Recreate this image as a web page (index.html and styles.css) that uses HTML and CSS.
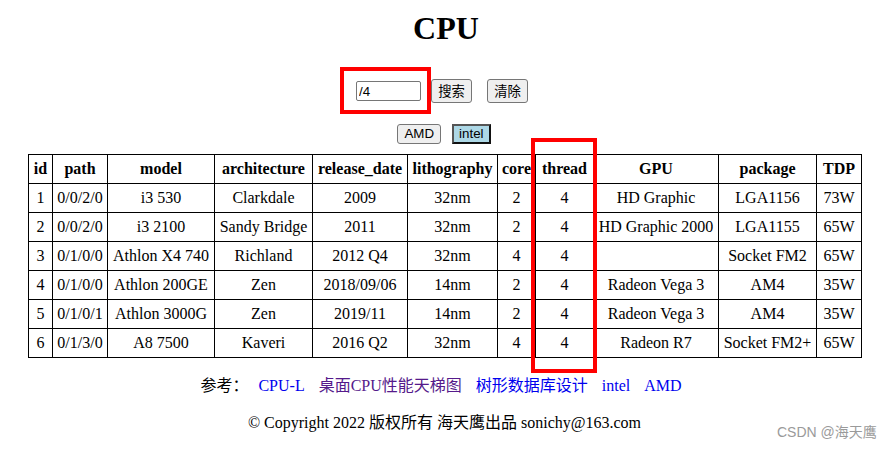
FILE: index.html
```html
<!DOCTYPE html>
<html lang="zh-CN">
<head>
<meta charset="utf-8">
<title>CPU</title>
<link rel="stylesheet" href="styles.css">
</head>
<body>
<h1 class="title">CPU</h1>
<div class="search-row">
  <input class="search-input" type="text" value="/4">
  <button class="btn btn-search">搜索</button>
  <button class="btn btn-clear">清除</button>
</div>
<div class="filter-row">
  <button class="tag">AMD</button>
  <button class="tag tag-active">intel</button>
</div>
<table class="cpu-table">
  <colgroup>
    <col class="c-id"><col class="c-path"><col class="c-model"><col class="c-arch"><col class="c-date"><col class="c-litho"><col class="c-core"><col class="c-thread"><col class="c-gpu"><col class="c-pkg"><col class="c-tdp">
  </colgroup>
  <thead>
    <tr><th>id</th><th>path</th><th>model</th><th>architecture</th><th>release_date</th><th>lithography</th><th>core</th><th>thread</th><th>GPU</th><th>package</th><th>TDP</th></tr>
  </thead>
  <tbody>
    <tr><td>1</td><td>0/0/2/0</td><td>i3 530</td><td>Clarkdale</td><td>2009</td><td>32nm</td><td>2</td><td>4</td><td>HD Graphic</td><td>LGA1156</td><td>73W</td></tr>
    <tr><td>2</td><td>0/0/2/0</td><td>i3 2100</td><td>Sandy Bridge</td><td>2011</td><td>32nm</td><td>2</td><td>4</td><td>HD Graphic 2000</td><td>LGA1155</td><td>65W</td></tr>
    <tr><td>3</td><td>0/1/0/0</td><td>Athlon X4 740</td><td>Richland</td><td>2012 Q4</td><td>32nm</td><td>4</td><td>4</td><td></td><td>Socket FM2</td><td>65W</td></tr>
    <tr><td>4</td><td>0/1/0/0</td><td>Athlon 200GE</td><td>Zen</td><td>2018/09/06</td><td>14nm</td><td>2</td><td>4</td><td>Radeon Vega 3</td><td>AM4</td><td>35W</td></tr>
    <tr><td>5</td><td>0/1/0/1</td><td>Athlon 3000G</td><td>Zen</td><td>2019/11</td><td>14nm</td><td>2</td><td>4</td><td>Radeon Vega 3</td><td>AM4</td><td>35W</td></tr>
    <tr><td>6</td><td>0/1/3/0</td><td>A8 7500</td><td>Kaveri</td><td>2016 Q2</td><td>32nm</td><td>4</td><td>4</td><td>Radeon R7</td><td>Socket FM2+</td><td>65W</td></tr>
  </tbody>
</table>
<div class="refs">
  <span class="refs-label">参考：</span>
  <a class="ref-link" href="#cpul">CPU-L</a>
  <a class="ref-link visited" href="#rank">桌面CPU性能天梯图</a>
  <a class="ref-link" href="#tree">树形数据库设计</a>
  <a class="ref-link" href="#intel">intel</a>
  <a class="ref-link" href="#amd">AMD</a>
</div>
<div class="copyright">© Copyright 2022 版权所有 海天鹰出品 sonichy@163.com</div>

<div class="mark mark-search"></div>
<div class="mark mark-thread"></div>
<div class="watermark">CSDN @海天鹰</div>
</body>
</html>
```

FILE: styles.css
```css
html, body {
  margin: 0;
  padding: 0;
  background: #ffffff;
}
body {
  position: relative;
  width: 892px;
  height: 449px;
  overflow: hidden;
  font-family: "Liberation Serif", "Noto Sans CJK SC", serif;
  font-size: 16px;
  color: #000;
}
.title {
  margin: 10px 0 0;
  height: 36px;
  line-height: 36px;
  font-size: 32px;
  font-weight: bold;
  text-align: center;
}
.search-row {
  margin-top: 33px;
  height: 24px;
  display: flex;
  justify-content: center;
  align-items: center;
  padding-right: 8px;
}
.search-input {
  box-sizing: border-box;
  width: 65px;
  height: 20px;
  margin: 0 10px 0 0;
  padding: 0 2px;
  border: 1px solid #767676;
  border-radius: 2px;
  font-family: "Liberation Sans", Arial, sans-serif;
  font-size: 13.33px;
  color: #000;
}
.btn {
  box-sizing: border-box;
  height: 24px;
  width: 41px;
  margin: 0;
  padding: 0 6px;
  border: 1px solid #767676;
  border-radius: 3px;
  background: #efefef;
  font-family: "Noto Sans CJK SC", sans-serif;
  font-size: 13.33px;
  line-height: 20px;
  color: #000;
}
.btn-clear {
  margin-left: 15px;
}
.filter-row {
  margin-top: 21px;
  height: 20px;
  display: flex;
  justify-content: center;
  align-items: center;
  padding-right: 4px;
}
.tag {
  box-sizing: border-box;
  height: 20px;
  margin: 0;
  padding: 0 6px;
  border: 1px solid #767676;
  border-radius: 3px;
  background: #efefef;
  font-family: "Liberation Sans", Arial, sans-serif;
  font-size: 13.33px;
  line-height: 16px;
  color: #000;
}
.tag-active {
  margin-left: 11px;
  padding: 0 5px;
  border: 2px solid;
  border-color: #555 #111 #111 #555;
  border-radius: 0;
  background: #add8e6;
}
.cpu-table {
  margin: 10px auto 0;
  border-collapse: collapse;
  table-layout: fixed;
  width: 833px;
  position: relative;
  left: -1px;
}
.c-id { width: 24px; }
.c-path { width: 55px; }
.c-model { width: 107px; }
.c-arch { width: 98px; }
.c-date { width: 95px; }
.c-litho { width: 90px; }
.c-core { width: 38px; }
.c-thread { width: 58px; }
.c-gpu { width: 125px; }
.c-pkg { width: 98px; }
.c-tdp { width: 45px; }
.cpu-table th,
.cpu-table td {
  border: 1px solid #000;
  padding: 5px 0;
  line-height: 18px;
  height: 18px;
  text-align: center;
  white-space: nowrap;
  overflow: visible;
  font-size: 16px;
}
.cpu-table th {
  font-weight: bold;
}
.refs {
  margin-top: 16px;
  height: 24px;
  line-height: 24px;
  display: flex;
  justify-content: center;
  padding-right: 10px;
}
.refs-label {
  margin-right: 10px;
}
.ref-link {
  color: #0000ee;
  text-decoration: none;
  margin-left: 14px;
}
.refs-label + .ref-link {
  margin-left: 0;
}
.ref-link.visited {
  color: #551a8b;
}
.copyright {
  margin-top: 13px;
  height: 24px;
  line-height: 24px;
  text-align: center;
  padding-right: 3px;
}
.mark {
  position: absolute;
  border: 4px solid #ff0000;
  box-sizing: border-box;
}
.mark-search {
  left: 340px;
  top: 67px;
  width: 91px;
  height: 47px;
}
.mark-thread {
  left: 531px;
  top: 138px;
  width: 66px;
  height: 235px;
}
.watermark {
  position: absolute;
  left: 777px;
  top: 423px;
  font-family: "Liberation Sans", Arial, "Noto Sans CJK SC", sans-serif;
  font-size: 14px;
  line-height: 18px;
  color: #9a9a9a;
  white-space: nowrap;
}
```
